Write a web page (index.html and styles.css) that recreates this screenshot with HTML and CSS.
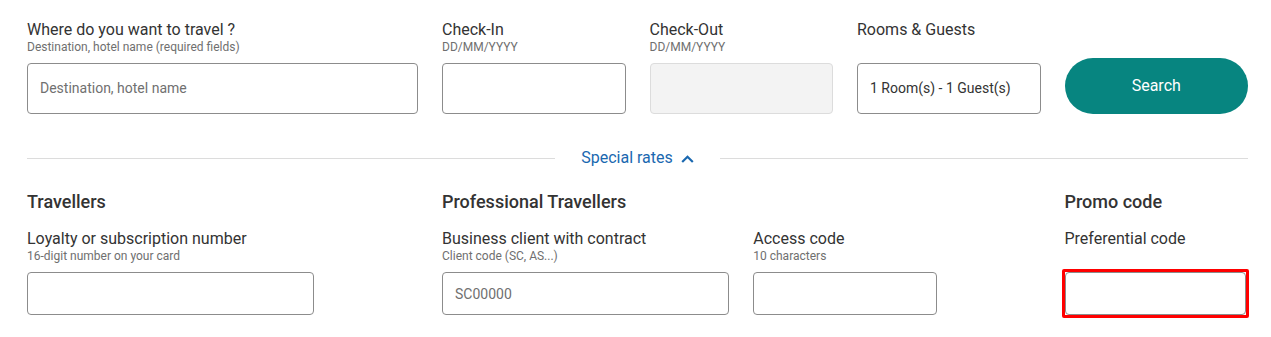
FILE: index.html
```html
<!DOCTYPE html>
<html lang="en">
<head>
<meta charset="utf-8">
<title>Search</title>
<link rel="stylesheet" href="styles.css">
</head>
<body>
<form class="booking">
  <div class="grid top">
    <div class="field span4">
      <div class="label">Where do you want to travel ?</div>
      <div class="hint">Destination, hotel name (required fields)</div>
      <input class="input tall" type="text" placeholder="Destination, hotel name">
    </div>
    <div class="field span2">
      <div class="label">Check-In</div>
      <div class="hint">DD/MM/YYYY</div>
      <input class="input tall" type="text">
    </div>
    <div class="field span2">
      <div class="label">Check-Out</div>
      <div class="hint">DD/MM/YYYY</div>
      <input class="input tall disabled" type="text" disabled>
    </div>
    <div class="field span2">
      <div class="label">Rooms &amp; Guests</div>
      <div class="hint"></div>
      <div class="input tall value">1 Room(s) - 1 Guest(s)</div>
    </div>
    <button class="search span2" type="button">Search</button>
  </div>

  <div class="divider">
    <span class="line"></span>
    <span class="toggle">Special rates
      <svg class="chev" width="13" height="8" viewBox="0 0 13 8"><path d="M1.2 7 L6.5 1.8 L11.8 7" fill="none" stroke="#1a68b0" stroke-width="2.2"/></svg>
    </span>
    <span class="line"></span>
  </div>

  <div class="grid bottom">
    <div class="heading c1">Travellers</div>
    <div class="heading c5">Professional Travellers</div>
    <div class="heading c11">Promo code</div>

    <div class="field c1s3">
      <div class="label">Loyalty or subscription number</div>
      <div class="hint">16-digit number on your card</div>
      <input class="input short" type="text">
    </div>
    <div class="field c5s3">
      <div class="label">Business client with contract</div>
      <div class="hint">Client code (SC, AS...)</div>
      <input class="input short" type="text" placeholder="SC00000">
    </div>
    <div class="field c8s2">
      <div class="label">Access code</div>
      <div class="hint">10 characters</div>
      <input class="input short" type="text">
    </div>
    <div class="field c11s2">
      <div class="label">Preferential code</div>
      <div class="hint"></div>
      <div class="ring">
        <input class="input short inring" type="text">
      </div>
    </div>
  </div>
</form>
</body>
</html>
```

FILE: styles.css
```css
* { box-sizing: border-box; }
html, body { margin: 0; padding: 0; background: #fff; }
body {
  font-family: Roboto, "Liberation Sans", Arial, sans-serif;
  color: #333;
}
.booking {
  width: 1221px;
  margin-left: 27px;
  padding-top: 20px;
  padding-bottom: 16px;
}
.grid {
  display: grid;
  grid-template-columns: repeat(12, 1fr);
  column-gap: 24px;
}
.span4 { grid-column: span 4; }
.span2 { grid-column: span 2; }
.field { display: flex; flex-direction: column; }
.label {
  font-size: 16px;
  line-height: 20px;
  color: #333;
  white-space: nowrap;
}
.hint {
  font-size: 12px;
  line-height: 14px;
  min-height: 14px;
  color: #6f6f6f;
  white-space: nowrap;
}
.input {
  display: block;
  width: 100%;
  margin-top: 9px;
  border: 1px solid #8c8c8c;
  border-radius: 4px;
  background: #fff;
  font-family: inherit;
  font-size: 14px;
  color: #333;
  padding: 0 12px;
  outline: none;
}
.input::placeholder { color: #707070; opacity: 1; }
.tall { height: 51px; padding-bottom: 1px; }
.short { height: 43px; }
.value { display: flex; align-items: center; white-space: nowrap; }
.disabled { background: #f3f3f3; border-color: #dcdcdc; }
.search {
  align-self: end;
  height: 56px;
  border: 0;
  border-radius: 28px;
  background: #078580;
  color: #fff;
  font-family: inherit;
  font-size: 16px;
  padding: 0 0 2px;
  cursor: pointer;
}
.divider {
  display: flex;
  align-items: center;
  gap: 26px;
  margin-top: 34px;
  height: 20px;
}
.line { flex: 1; height: 1px; background: #dcdcdc; }
.toggle {
  display: flex;
  align-items: center;
  gap: 8px;
  font-size: 16px;
  line-height: 20px;
  color: #1a68b0;
  white-space: nowrap;
}
.chev { display: block; margin-top: 1px; }
.bottom { margin-top: 22px; }
.heading {
  font-size: 18px;
  line-height: 24px;
  font-weight: 500;
  color: #333;
  margin-bottom: 15px;
  white-space: nowrap;
}
.c1 { grid-column: 1 / span 4; grid-row: 1; }
.c5 { grid-column: 5 / span 6; grid-row: 1; }
.c11 { grid-column: 11 / span 2; grid-row: 1; }
.c1s3 { grid-column: 1 / span 3; grid-row: 2; }
.c5s3 { grid-column: 5 / span 3; grid-row: 2; }
.c8s2 { grid-column: 8 / span 2; grid-row: 2; }
.c11s2 { grid-column: 11 / span 2; grid-row: 2; }
.ring {
  margin-top: 6px;
  margin-left: -3px;
  width: calc(100% + 3.5px);
  border: 3px solid #ff0000;
  border-radius: 2px;
}
.inring { margin-top: 0; }
```
